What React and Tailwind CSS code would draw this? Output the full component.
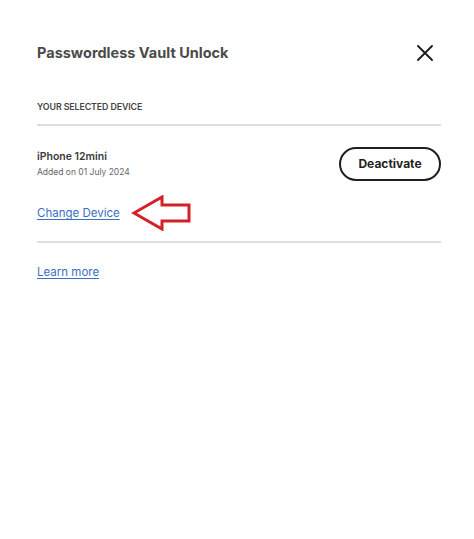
const App = () => {
    return (
        <div className="w-full min-h-[539px] bg-white" style={{ fontFamily: 'Inter, "Noto Sans", sans-serif' }}>
            <div className="pl-[37px] pr-[33px] pt-[44px]">
                {/* Header */}
                <div className="flex items-center justify-between">
                    <h2 className="text-[14.5px] leading-[18px] font-bold text-[#4a4a4a]">Passwordless Vault Unlock</h2>
                    <button className="mr-2 text-[#1a1a1a]" aria-label="Close">
                        <svg width="16" height="16" viewBox="0 0 16 16" fill="none" stroke="currentColor" strokeWidth="1.8" strokeLinecap="round">
                            <path d="M1 1 L15 15 M15 1 L1 15" />
                        </svg>
                    </button>
                </div>

                {/* Section label */}
                <p className="mt-[39px] text-[8.8px] leading-[12px] font-semibold text-[#444] tracking-[-0.01em]">YOUR SELECTED DEVICE</p>
                <div className="mt-[11px] h-[2px] bg-[#dedede]" />

                {/* Device row */}
                <div className="mt-[21px] flex items-center justify-between">
                    <div className="flex flex-col">
                        <span className="text-[10.5px] leading-[14px] font-semibold text-[#3a3a3a]">iPhone 12mini</span>
                        <span className="mt-[2px] text-[8.5px] leading-[12px] text-[#666]">Added on 01 July 2024</span>
                    </div>
                    <button className="h-[34px] w-[102px] rounded-full border-2 border-[#1f1f1f] text-[12px] font-bold text-[#1f1f1f]">
                        Deactivate
                    </button>
                </div>

                {/* Change device */}
                <div className="mt-[14px] flex items-center gap-[11px]">
                    <a href="#" className="text-[11.5px] leading-[16px] text-[#3b6fc2] underline underline-offset-2">Change Device</a>
                    <svg width="62" height="36" viewBox="0 0 62 36" fill="none" stroke="#d62027" strokeWidth="3" strokeLinejoin="miter">
                        <polygon points="3,18 31,2 31,10 58,10 58,26 31,26 31,34" />
                    </svg>
                </div>

                <div className="mt-[10px] h-[2px] bg-[#dedede]" />

                <a href="#" className="mt-[21px] inline-block text-[11.5px] leading-[16px] text-[#3b6fc2] underline underline-offset-2">Learn more</a>
            </div>
        </div>
    );
};

export default App;
